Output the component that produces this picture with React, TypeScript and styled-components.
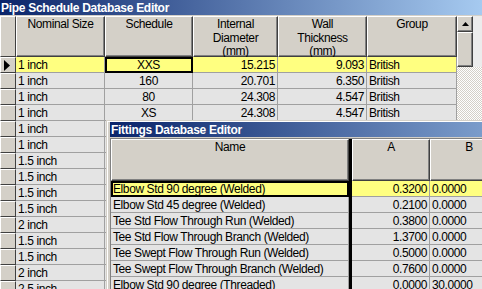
import React from "react";
import styled, { createGlobalStyle } from "styled-components";

const GlobalStyle = createGlobalStyle`
  html, body { margin: 0; padding: 0; background: #d4d0c8; }
  body { font-family: "Liberation Sans", Arial, sans-serif; }
`;

const Desktop = styled.div`
  position: relative;
  width: 482px;
  height: 289px;
  overflow: hidden;
  background: #d4d0c8;
`;

const TitleBar = styled.div`
  height: 15px;
  display: flex;
  align-items: center;
  padding-left: 1px;
  background: linear-gradient(to right, #0a246a, #a6caf0);
  color: #fff;
  font-weight: bold;
  font-size: 12px;
  letter-spacing: -0.3px;
  white-space: nowrap;
`;

const PipeWindow = styled.div`
  display: flex;
  flex-direction: column;
  width: 482px;
`;

const Separator = styled.div`
  height: 1px;
  background: #d4d0c8;
`;

const GridBody = styled.div`
  display: flex;
`;

const Grid = styled.div`
  display: flex;
  flex-direction: column;
  background: #808080;
`;

const Row = styled.div<{ $h: number }>`
  display: flex;
  height: ${(p) => p.$h}px;
`;

const HeaderCell = styled.div<{ $w: number }>`
  width: ${(p) => p.$w}px;
  flex: none;
  box-sizing: border-box;
  background: #d4d0c8;
  border-top: 1px solid #fff;
  border-left: 1px solid #fff;
  border-right: 1px solid #404040;
  border-bottom: 1px solid #404040;
  box-shadow: inset -1px -1px 0 #808080;
  text-align: center;
  font-size: 12px;
  letter-spacing: -0.4px;
  line-height: 13.5px;
  padding-top: 1px;
  color: #000;
  white-space: pre;
`;

const Indicator = styled.div<{ $w: number }>`
  width: ${(p) => p.$w}px;
  flex: none;
  box-sizing: border-box;
  background: #d4d0c8;
  border-top: 1px solid #fff;
  border-left: 1px solid #fff;
  border-right: 1px solid #404040;
  border-bottom: 1px solid #404040;
  display: flex;
  align-items: center;
  padding-left: 3px;
`;

const Cell = styled.div<{
  $w: number;
  $align?: "left" | "center" | "right";
  $selected?: boolean;
  $focused?: boolean;
}>`
  width: ${(p) => p.$w}px;
  flex: none;
  box-sizing: border-box;
  background: ${(p) => (p.$selected ? "#ffff80" : "#e4e4e4")};
  border-right: 1px solid #a0a0a0;
  border-bottom: 1px solid #a0a0a0;
  ${(p) => (p.$focused ? "outline: 2px solid #000; outline-offset: -2px;" : "")}
  font-size: 12px;
  letter-spacing: -0.4px;
  line-height: 16px;
  padding: 0 2px;
  text-align: ${(p) => p.$align || "left"};
  color: #000;
  white-space: nowrap;
  overflow: hidden;
`;

const ScrollColumn = styled.div`
  display: flex;
  flex-direction: column;
  width: 25px;
`;

const ScrollTop = styled.div`
  display: flex;
  height: 51px;
`;

const ScrollButtons = styled.div`
  width: 16px;
  display: flex;
  flex-direction: column;
`;

const ScrollButton = styled.div<{ $h: number }>`
  height: ${(p) => p.$h}px;
  box-sizing: border-box;
  background: #d4d0c8;
  border-top: 1px solid #fff;
  border-left: 1px solid #fff;
  border-right: 1px solid #404040;
  border-bottom: 1px solid #404040;
  box-shadow: inset -1px -1px 0 #808080;
  display: flex;
  align-items: center;
  justify-content: center;
`;

const ScrollStrip = styled.div`
  flex: 1;
  background: #ececec;
`;

const Track = styled.div`
  flex: 1;
  background: repeating-conic-gradient(#ffffff 0 25%, #d4d0c8 0 50%) 0 0 / 2px 2px;
`;

const FittingsWindow = styled.div`
  position: absolute;
  left: 106px;
  top: 120px;
  width: 520px;
  height: 200px;
  box-sizing: border-box;
  background: #d4d0c8;
  border-top: 1px solid #d4d0c8;
  border-left: 1px solid #d4d0c8;
  box-shadow: inset 1px 1px 0 #fff;
  padding: 1px 0 0 3px;
  display: flex;
  flex-direction: column;
`;

const FrameGap = styled.div`
  height: 1px;
`;

const FitGrid = styled.div`
  display: flex;
  flex-direction: column;
  border-top: 1px solid #808080;
  border-left: 1px solid #808080;
`;

const Divider = styled.div`
  width: 3px;
  flex: none;
  background: #000;
`;

const Arrow = () => (
  <svg width="6" height="11" viewBox="0 0 6 11">
    <polygon points="0,0 6,5.5 0,11" fill="#000" />
  </svg>
);

const UpArrow = () => (
  <svg width="7" height="4" viewBox="0 0 7 4">
    <polygon points="3.5,0 7,4 0,4" fill="#000" />
  </svg>
);

const pipeCols = [89, 88, 85, 89, 90];
const pipeRows = [
  ["1 inch", "XXS", "15.215", "9.093", "British"],
  ["1 inch", "160", "20.701", "6.350", "British"],
  ["1 inch", "80", "24.308", "4.547", "British"],
  ["1 inch", "XS", "24.308", "4.547", "British"],
  ["1 inch", "40", "26.645", "3.378", "British"],
  ["1 inch", "STD", "26.645", "3.378", "British"],
  ["1.5 inch", "XXS", "27.940", "10.160", "British"],
  ["1.5 inch", "160", "33.985", "7.137", "British"],
  ["1.5 inch", "80", "38.100", "5.080", "British"],
  ["1.5 inch", "XS", "38.100", "5.080", "British"],
  ["2 inch", "XXS", "38.176", "11.074", "British"],
  ["1.5 inch", "40", "40.894", "3.683", "British"],
  ["1.5 inch", "STD", "40.894", "3.683", "British"],
  ["2 inch", "160", "42.900", "8.738", "British"],
  ["2.5 inch", "XXS", "44.958", "14.021", "British"],
];
const pipeAlign: ("left" | "center" | "right")[] = ["left", "center", "right", "right", "left"];

const fittings = [
  ["Elbow Std 90 degree (Welded)", "0.3200", "0.0000"],
  ["Elbow Std 45 degree (Welded)", "0.2100", "0.0000"],
  ["Tee Std Flow Through Run (Welded)", "0.3800", "0.0000"],
  ["Tee Std Flow Through Branch (Welded)", "1.3700", "0.0000"],
  ["Tee Swept Flow Through Run (Welded)", "0.5000", "0.0000"],
  ["Tee Swept Flow Through Branch (Welded)", "0.7600", "0.0000"],
  ["Elbow Std 90 degree (Threaded)", "0.0000", "30.0000"],
];

export default function App() {
  return (
    <Desktop>
      <GlobalStyle />
      <PipeWindow>
        <TitleBar>Pipe Schedule Database Editor</TitleBar>
        <Separator />
        <GridBody>
          <Grid>
            <Row $h={41}>
              <Indicator $w={16} />
              <HeaderCell $w={pipeCols[0]}>Nominal Size</HeaderCell>
              <HeaderCell $w={pipeCols[1]}>Schedule</HeaderCell>
              <HeaderCell $w={pipeCols[2]}>{"Internal\nDiameter\n(mm)"}</HeaderCell>
              <HeaderCell $w={pipeCols[3]}>{"Wall\nThickness\n(mm)"}</HeaderCell>
              <HeaderCell $w={pipeCols[4]}>Group</HeaderCell>
            </Row>
            {pipeRows.map((r, i) => (
              <Row $h={16} key={i}>
                <Indicator $w={16}>{i === 0 && <Arrow />}</Indicator>
                {r.map((v, j) => (
                  <Cell
                    key={j}
                    $w={pipeCols[j]}
                    $align={pipeAlign[j]}
                    $selected={i === 0}
                    $focused={i === 0 && j === 1}
                  >
                    {v}
                  </Cell>
                ))}
              </Row>
            ))}
          </Grid>
          <ScrollColumn>
            <ScrollTop>
              <ScrollButtons>
                <ScrollButton $h={16}>
                  <UpArrow />
                </ScrollButton>
                <ScrollButton $h={35} />
              </ScrollButtons>
              <ScrollStrip />
            </ScrollTop>
            <Track />
          </ScrollColumn>
        </GridBody>
      </PipeWindow>

      <FittingsWindow>
        <TitleBar>Fittings Database Editor</TitleBar>
        <FrameGap />
        <FitGrid>
          <Row $h={42}>
            <HeaderCell $w={238}>Name</HeaderCell>
            <Divider />
            <HeaderCell $w={78}>A</HeaderCell>
            <HeaderCell $w={78}>B</HeaderCell>
          </Row>
          {fittings.map((r, i) => (
            <Row $h={16} key={i}>
              <Cell $w={238} $selected={i === 0} $focused={i === 0}>
                {r[0]}
              </Cell>
              <Divider />
              <Cell $w={78} $align="right" $selected={i === 0}>
                {r[1]}
              </Cell>
              <Cell $w={78} $selected={i === 0}>
                {r[2]}
              </Cell>
            </Row>
          ))}
        </FitGrid>
      </FittingsWindow>
    </Desktop>
  );
}
